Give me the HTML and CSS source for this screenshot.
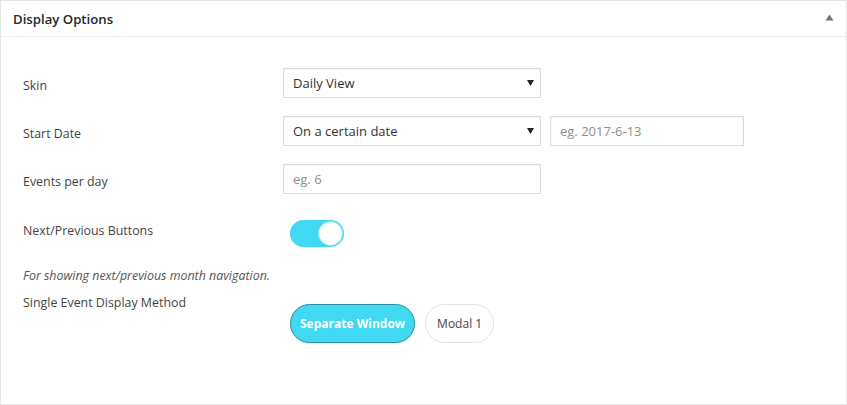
FILE: index.html
```html
<!DOCTYPE html>
<html>
<head>
<meta charset="utf-8">
<link rel="stylesheet" href="styles.css">
</head>
<body>
<div class="panel">
  <div class="panel-header">
    <span class="panel-title">Display Options</span>
    <svg class="toggle-arrow" width="9" height="7" viewBox="0 0 9 7"><path d="M4.5 0.5 L8.5 6.5 L0.5 6.5 Z" fill="#72777c"/></svg>
  </div>
  <div class="panel-body">
    <div class="row row-field">
      <div class="label">Skin</div>
      <div class="controls">
        <div class="select"><span>Daily View</span><svg width="7" height="6" viewBox="0 0 7 6"><path d="M0 0 H7 L3.5 6 Z" fill="#222"/></svg></div>
      </div>
    </div>
    <div class="row row-field">
      <div class="label">Start Date</div>
      <div class="controls">
        <div class="select"><span>On a certain date</span><svg width="7" height="6" viewBox="0 0 7 6"><path d="M0 0 H7 L3.5 6 Z" fill="#222"/></svg></div>
        <div class="input input-date">eg. 2017-6-13</div>
      </div>
    </div>
    <div class="row row-field row-events">
      <div class="label">Events per day</div>
      <div class="controls">
        <div class="input input-wide">eg. 6</div>
      </div>
    </div>
    <div class="row row-toggle">
      <div class="label label-tight">Next/Previous Buttons</div>
      <div class="controls controls-indent">
        <div class="switch"><div class="knob"></div></div>
      </div>
    </div>
    <p class="note">For showing next/previous month navigation.</p>
    <div class="row row-method">
      <div class="label label-tight">Single Event Display Method</div>
      <div class="controls controls-indent controls-buttons">
        <div class="pill pill-active">Separate Window</div>
        <div class="pill">Modal 1</div>
      </div>
    </div>
  </div>
</div>
</body>
</html>
```
FILE: styles.css
```css
* { box-sizing: border-box; }
html, body { margin: 0; padding: 0; background: #fff; }
body {
  font-family: "Open Sans", "Noto Sans", "Liberation Sans", sans-serif;
  font-size: 12.4px;
  color: #32373c;
  width: 847px;
  height: 405px;
}
.panel {
  width: 847px;
  height: 405px;
  border: 1px solid #e5e5e5;
  background: #fff;
}
.panel-header {
  height: 36px;
  border-bottom: 1px solid #eeeeee;
  display: flex;
  align-items: center;
  justify-content: space-between;
  padding: 0 12px 0 12px;
}
.panel-title {
  font-size: 13.2px;
  font-weight: 600;
  color: #23282d;
}
.toggle-arrow { display: block; margin-top: -2px; }
.panel-body {
  padding: 31px 0 0 22px;
}
.row { display: flex; }
.label {
  width: 260px;
  flex: none;
  line-height: 18px;
  padding-top: 9px;
  color: #444;
}
.label-tight { padding-top: 2px; }
.controls { display: flex; gap: 9px; }
.controls-indent { padding-left: 7px; }
.row-field { margin-bottom: 18px; }
.row-events { margin-bottom: 26px; }
.select {
  width: 258px;
  height: 30px;
  border: 1px solid #dddddd;
  display: flex;
  align-items: center;
  justify-content: space-between;
  padding: 0 6px 0 9px;
  font-size: 13px;
  color: #333;
  box-shadow: inset 0 1px 2px rgba(0,0,0,0.04);
}
.input {
  height: 30px;
  border: 1px solid #dddddd;
  display: flex;
  align-items: center;
  padding: 0 9px;
  font-size: 13px;
  color: #8c8f94;
  box-shadow: inset 0 1px 2px rgba(0,0,0,0.04);
}
.input-date { width: 194px; }
.input-wide { width: 258px; }
.switch {
  width: 54px;
  height: 27px;
  border-radius: 14px;
  background: #40d9f1;
  display: flex;
  align-items: center;
  justify-content: flex-end;
  padding-right: 1px;
}
.knob {
  width: 25px;
  height: 25px;
  border-radius: 50%;
  background: #fff;
  border: 1px solid #8fe6f4;
}
.note {
  margin: 20px 0 0 0;
  line-height: 18px;
  font-style: italic;
  color: #555;
}
.row-method { margin-top: 7px; }
.controls-buttons { margin-top: 12px; gap: 10px; }
.pill {
  height: 39px;
  border-radius: 20px;
  border: 1px solid #e3e3e3;
  display: flex;
  align-items: center;
  padding: 0 11px;
  font-size: 12px;
  color: #444;
  background: #fff;
}
.pill-active {
  background: #40d9f1;
  border-color: #2c8d9f;
  color: #fff;
  font-weight: 700;
  padding: 0 9px;
  box-shadow: 0 1px 1px rgba(0,0,0,0.08);
}
```
